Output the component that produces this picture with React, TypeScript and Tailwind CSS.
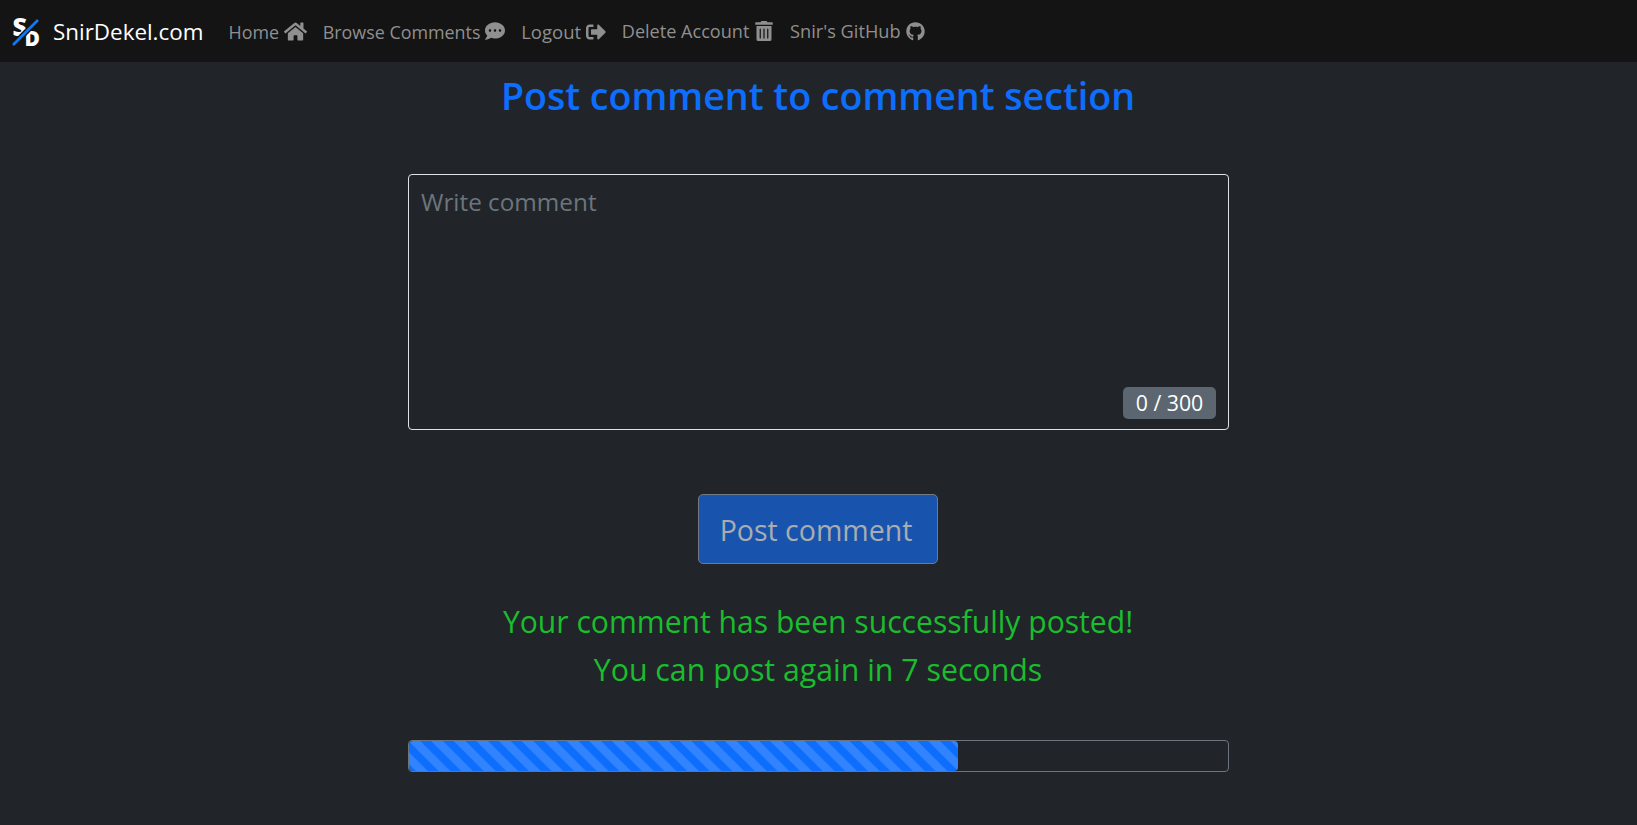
import React from "react";
import { FaHome, FaCommentDots, FaSignOutAlt, FaTrashAlt, FaGithub } from "react-icons/fa";

const links = [
  { label: "Home", Icon: FaHome, size: 23, text: "text-[17.9px]" },
  { label: "Browse Comments", Icon: FaCommentDots, size: 20, text: "text-[17.9px]" },
  { label: "Logout", Icon: FaSignOutAlt, size: 20, text: "text-[18.5px]" },
  { label: "Delete Account", Icon: FaTrashAlt, size: 20, text: "text-[18.1px]" },
  { label: "Snir's GitHub", Icon: FaGithub, size: 19, text: "text-[18.2px]" },
];

function Logo() {
  return (
    <svg width="30" height="32" viewBox="0 0 30 32" className="shrink-0 overflow-visible">
      <text x="0.5" y="21" fontFamily="'Open Sans', sans-serif" fontWeight="800" fontSize="25" fill="#fff">S</text>
      <text x="12.5" y="30.5" fontFamily="'Open Sans', sans-serif" fontWeight="800" fontSize="21" fill="#fff">D</text>
      <line x1="1" y1="30" x2="26" y2="5" stroke="#141414" strokeWidth="5.5" />
      <line x1="1" y1="30" x2="26" y2="5" stroke="#1478f0" strokeWidth="2.6" />
    </svg>
  );
}

export default function App() {
  return (
    <div className="min-h-[825px] bg-[#212529] font-['Open_Sans','Noto_Sans',sans-serif]">
      <nav className="flex h-[62px] items-center bg-[#141414] pl-[12px]">
        <Logo />
        <span className="mt-[1px] ml-[11px] mr-[25px] text-[22.4px] text-white">SnirDekel.com</span>
        <div className="mt-[1px] flex items-center gap-[15.7px]">
          {links.map(({ label, Icon, size, text }) => (
            <a key={label} className={`flex items-center gap-[5px] text-[#8f8f8f] ${text}`}>
              <span className="pt-[1px]">{label}</span>
              <Icon size={size} />
            </a>
          ))}
        </div>
      </nav>
      <main className="flex flex-col items-center">
        <h1 className="mt-[9px] mr-[1px] text-[37.6px] leading-[50px] font-semibold text-[#0d6efd]">
          Post comment to comment section
        </h1>
        <div className="relative mt-[53px] h-[256px] w-[821px]">
          <textarea
            placeholder="Write comment"
            className="block h-full w-full resize-none rounded-[4px] border border-[#dee2e6] bg-[#212529] px-3 py-[9px] text-[24.3px] leading-[36px] text-white outline-none placeholder:text-[#6c757d]"
          />
          <span className="absolute right-[13px] bottom-[11px] flex h-[32px] w-[93px] items-center justify-center rounded-[5px] bg-[#5c6670] text-[21.3px] text-white">
            0 / 300
          </span>
        </div>
        <button className="mt-[64px] mr-[1px] flex h-[70px] w-[240px] items-center justify-center rounded-[5px] border border-[#6f7a86] bg-[#1854ad] pt-[2px] pr-[4px] text-[28.5px] text-[#a9acb0]">
          Post comment
        </button>
        <p className="mt-[34px] mr-[1px] text-[30.1px] leading-[48px] text-[#1abd2e]">
          Your comment has been successfully posted!
        </p>
        <p className="mr-[1px] text-[30.3px] leading-[48px] text-[#1abd2e]">You can post again in 7 seconds</p>
        <div className="mt-[46px] h-[32px] w-[821px] overflow-hidden rounded-[4px] border border-[#6c757d]">
          <div className="h-full w-[67%] rounded-[4px] bg-[#0d6efd] bg-[linear-gradient(45deg,rgba(255,255,255,.15)_25%,transparent_25%,transparent_50%,rgba(255,255,255,.15)_50%,rgba(255,255,255,.15)_75%,transparent_75%,transparent)] bg-[length:22.6px_22.6px]" />
        </div>
      </main>
    </div>
  );
}
